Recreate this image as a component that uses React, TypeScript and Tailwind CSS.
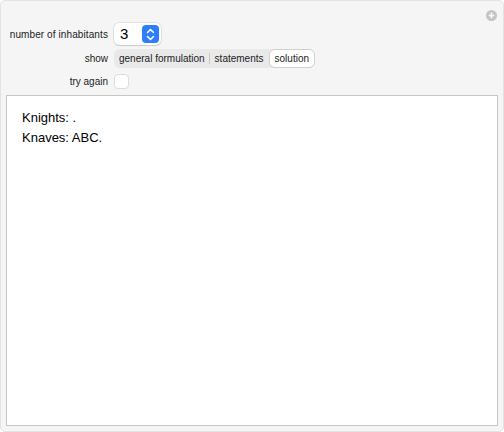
import React from "react";

function Spinner() {
  return (
    <div className="w-[17px] h-[18px] rounded-[4px] bg-[#2d7ff9] flex items-center justify-center">
      <svg width="9" height="13" viewBox="0 0 9 13" fill="none" stroke="white" strokeWidth="1.6" strokeLinecap="round" strokeLinejoin="round">
        <path d="M1.5 4.5 L4.5 1.5 L7.5 4.5" />
        <path d="M1.5 8.5 L4.5 11.5 L7.5 8.5" />
      </svg>
    </div>
  );
}

export default function App() {
  return (
    <div className="w-[504px] h-[432px] bg-white" style={{ fontFamily: '"Helvetica Neue", "Liberation Sans", Arial, sans-serif' }}>
      <div className="relative w-full h-full bg-[#f5f5f5] border border-[#e3e3e3] rounded-[5px] flex flex-col">
        <div className="absolute right-[6px] top-[9px] w-[11px] h-[11px] rounded-full bg-[#c4c4c4] flex items-center justify-center">
          <svg width="7" height="7" viewBox="0 0 7 7" stroke="white" strokeWidth="1.6">
            <path d="M3.5 0.8 V6.2 M0.8 3.5 H6.2" />
          </svg>
        </div>

        <div className="pt-[22px] flex flex-col gap-[4px]">
          <div className="flex items-center h-[22px]">
            <div className="w-[107px] text-right text-[10px] text-[#222] tracking-[0.1px]">number of inhabitants</div>
            <div className="ml-[6px] w-[47px] h-[22px] bg-white rounded-[5px] shadow-[0_0_0_0.5px_rgba(0,0,0,0.15),0_1px_1px_rgba(0,0,0,0.1)] flex items-center justify-between pl-[6px] pr-[2px]">
              <span className="text-[15px] text-black">3</span>
              <Spinner />
            </div>
          </div>

          <div className="flex items-center h-[19px]">
            <div className="w-[107px] text-right text-[10px] text-[#222]">show</div>
            <div className="ml-[6px] h-[19px] bg-[#e9e9e9] rounded-[6px] flex items-center text-[10px] text-[#222] pl-[5px]">
              <span className="pr-[4px]">general formulation</span>
              <span className="w-px h-[11px] bg-[#c8c8c8]" />
              <span className="px-[5px]">statements</span>
              <span className="h-[19px] px-[5px] bg-white rounded-[6px] border border-[#d0d0d0] flex items-center">solution</span>
            </div>
          </div>

          <div className="flex items-center h-[16px] mt-[1px]">
            <div className="w-[107px] text-right text-[10px] text-[#222]">try again</div>
            <div className="ml-[6px] w-[15px] h-[15px] bg-white rounded-[4px] border border-[#dcdcdc]" />
          </div>
        </div>

        <div className="mx-[5px] mt-[6px] mb-[5px] flex-1 bg-white border border-[#c6c6c6] pl-[15px] pt-[12px] text-[13px] text-black leading-[20px]">
          <div>Knights: .</div>
          <div>Knaves: ABC.</div>
        </div>
      </div>
    </div>
  );
}
